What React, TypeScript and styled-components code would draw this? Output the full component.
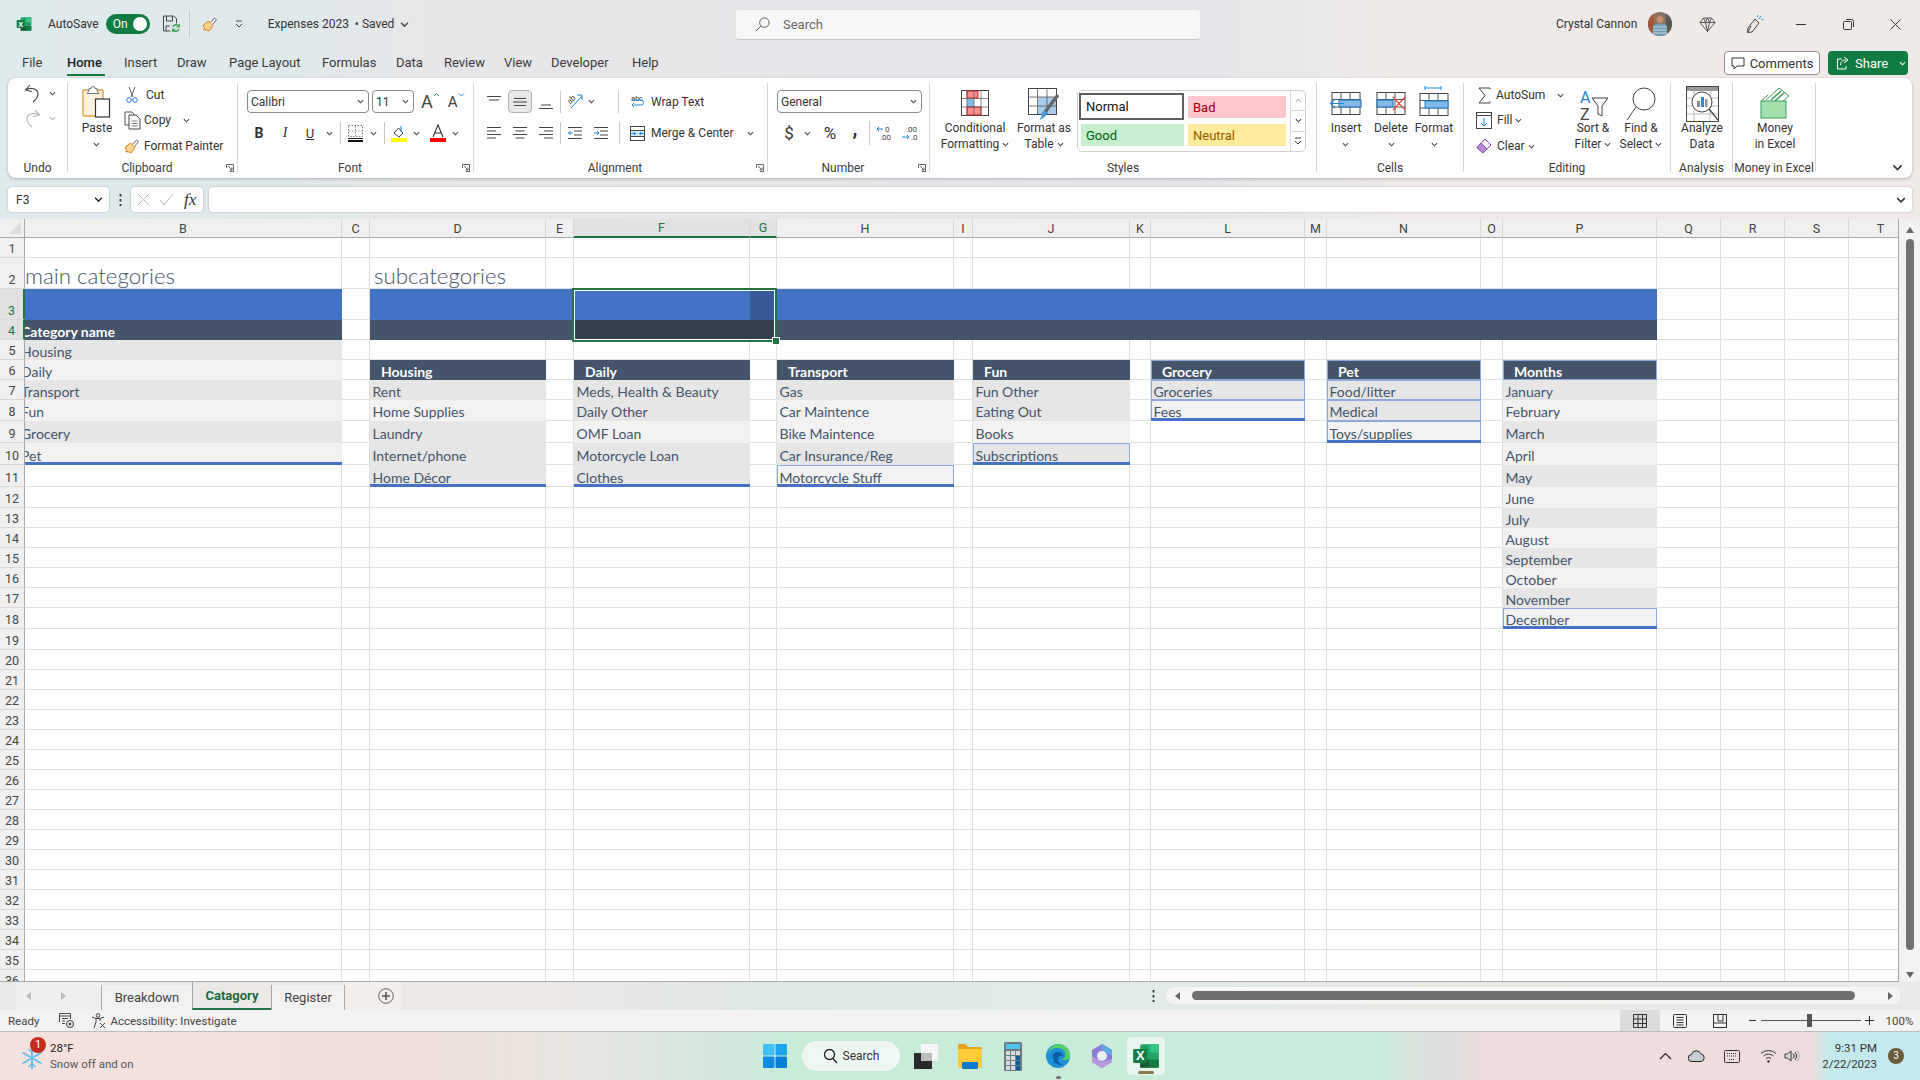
import React from 'react';
import styled, { createGlobalStyle } from 'styled-components';

const UI = `Roboto, "Liberation Sans", sans-serif`;
const CELL = `Lato, "Liberation Sans", sans-serif`;
const GREEN = '#107c41';

const Global = createGlobalStyle`
  html, body { margin: 0; padding: 0; width: 1920px; height: 1080px; overflow: hidden; background: #e6e7ea; }
  #root { width: 1920px; height: 1080px; }
  * { box-sizing: border-box; }
`;

const Page = styled.div`
  width: 1920px; height: 1080px; display: flex; flex-direction: column;
  font-family: ${UI}; font-size: 12px; color: #262626;
`;
const Chrome = styled.div`
  background: linear-gradient(90deg,#dfeaec 0,#e0e9ea 300px,#e7e7e9 430px,#e5e6ea 1200px,#efeae8 1400px,#efeae8 100%);
`;

/* title bar */
const TitleBar = styled.div`height: 48px; display: flex; align-items: center;`;
const TitleLeft = styled.div`width: 735px; display: flex; align-items: center; padding-left: 16px;`;
const TitleText = styled.span<{ $ml?: number }>`margin-left: ${p => p.$ml ?? 0}px; font-size: 12px; color: #333; white-space: nowrap; display: inline-flex; align-items: center; gap: 6px;`;
const Toggle = styled.div`
  margin-left: 7px; width: 44px; height: 20px; border-radius: 10px; background: ${GREEN}; color: #fff; font-size: 12px;
  display: flex; align-items: center; justify-content: space-between; padding: 0 3px 0 7px;
`;
const ToggleKnob = styled.i`width: 14px; height: 14px; border-radius: 50%; background: #fff;`;
const VBar = styled.i<{ $ml?: number; $h?: number }>`display: block; width: 1px; height: ${p => p.$h ?? 28}px; background: #c9c9c9; margin-left: ${p => p.$ml ?? 0}px; flex: none;`;
const Slot = styled.span<{ $ml?: number }>`display: inline-flex; align-items: center; margin-left: ${p => p.$ml ?? 0}px; flex: none;`;
const SearchBox = styled.div`
  width: 466px; height: 31px; background: #f8f8f8; border-radius: 4px; border: 1px solid #e3e3e3; border-bottom-color: #c8c8c8;
  display: flex; align-items: center; padding-left: 19px; gap: 13px; color: #666; font-size: 13px;
`;
const TitleRight = styled.div`flex: 1; display: flex; align-items: center; padding-left: 355px;`;
const Avatar = styled.div`margin-left: 11px; width: 24px; height: 24px; border-radius: 50%; overflow: hidden; flex: none;`;

/* tab row */
const TabRow = styled.div`height: 30px; display: flex; align-items: center; padding-left: 22px;`;
const RibbonTab = styled.div<{ $w: number; $on?: boolean }>`
  width: ${p => p.$w}px; font-size: 13px; color: #3a3a3a; position: relative; height: 22px; line-height: 22px; flex: none; white-space: nowrap;
  ${p => p.$on ? `font-weight: 500; color:#222; &::after{content:'';position:absolute;left:0;top:22px;width:38px;height:2px;background:${GREEN};}` : ''}
`;
const TabActions = styled.div`margin-left: auto; display: flex; gap: 8px; padding-right: 12px;`;
const CommentsButton = styled.div`
  width: 96px; height: 24px; background: #fff; border: 1px solid #8f8f8f; border-radius: 4px; font-size: 13px; color: #333;
  display: flex; align-items: center; justify-content: center; gap: 5px;
`;
const ShareButton = styled.div`
  width: 80px; height: 24px; background: ${GREEN}; border-radius: 4px; color: #fff; font-size: 13px;
  display: flex; align-items: center; padding-left: 8px; gap: 5px;
`;

/* ribbon */
const Ribbon = styled.div`
  margin: 0 8px; height: 100px; background: #fff; border-radius: 8px; box-shadow: 0 1px 3px rgba(0,0,0,.25);
  display: flex; align-items: flex-start; padding-top: 5px;
`;
const Group = styled.section<{ $w: number; $last?: boolean }>`
  width: ${p => p.$w}px; height: 89px; flex: none; display: flex; flex-direction: column;
  border-right: ${p => p.$last ? 'none' : '1px solid #d6d6d6'};
`;
const Body = styled.div<{ $pl?: number; $gap?: number }>`
  height: 79px; display: flex; padding-left: ${p => p.$pl ?? 0}px; gap: ${p => p.$gap ?? 0}px;
`;
const LabelRow = styled.div<{ $launch?: boolean }>`
  display: grid; grid-template-columns: 1fr auto 1fr; align-items: center; height: 10px; font-size: 12px; color: #3c3c3c; line-height: 12px; white-space: nowrap;
  padding-right: ${p => p.$launch ? 11 : 0}px;
`;
const LabelEnd = styled.span<{ $launch?: boolean }>`justify-self: end; display: inline-flex; margin-right: ${p => p.$launch ? -8 : 0}px;`;
const Stack = styled.div<{ $pt?: number; $gap?: number; $ml?: number; $w?: number }>`
  display: flex; flex-direction: column; padding-top: ${p => p.$pt ?? 0}px; gap: ${p => p.$gap ?? 0}px; margin-left: ${p => p.$ml ?? 0}px;
  ${p => p.$w ? `width:${p.$w}px;` : ''} flex: none;
`;
const Row = styled.div<{ $h?: number; $gap?: number; $ml?: number }>`
  display: flex; align-items: center; height: ${p => p.$h ?? 24}px; gap: ${p => p.$gap ?? 0}px; white-space: nowrap; color: #333; margin-left: ${p => p.$ml ?? 0}px;
`;
const SmallLabel = styled.span<{ $ml?: number }>`margin-left: ${p => p.$ml ?? 0}px; font-size: 12px; color: #333; white-space: nowrap;`;
const Large = styled.div<{ $w: number; $ml?: number; $ih?: number }>`
  width: ${p => p.$w}px; margin-left: ${p => p.$ml ?? 0}px; flex: none; display: flex; flex-direction: column; align-items: center; padding-top: 3px;
  font-size: 12px; line-height: 16px; text-align: center; color: #333;
`;
const LargeIcon = styled.div<{ $pt?: number }>`height: 34px; display: flex; align-items: flex-start; justify-content: center; padding-top: ${p => p.$pt ?? 0}px;`;
const LargeText = styled.div`white-space: nowrap; display: flex; flex-direction: column; align-items: center;`;
const ChevLine = styled.div`height: 16px; display: flex; align-items: center;`;
const Select = styled.div<{ $w: number; $ml?: number }>`
  width: ${p => p.$w}px; height: 23px; margin-left: ${p => p.$ml ?? 0}px; border: 1px solid #8a8a8a; border-radius: 4px; background: #fff;
  display: flex; align-items: center; justify-content: space-between; padding: 0 4px 0 3px; font-size: 12px; color: #333; flex: none;
`;
const BoldGlyph = styled.span<{ $w: number; $b?: boolean; $i?: boolean; $u?: boolean; $serif?: boolean; $fs?: number; $ml?: number; $lift?: number }>`
  width: ${p => p.$w}px; text-align: center; font-size: ${p => p.$fs ?? 13}px; flex: none; color: #333; margin-left: ${p => p.$ml ?? 0}px;
  font-weight: ${p => p.$b ? 700 : 400}; font-style: ${p => p.$i ? 'italic' : 'normal'};
  text-decoration: ${p => p.$u ? 'underline' : 'none'};
  font-family: ${p => p.$serif ? '"Liberation Serif", serif' : UI};
  transform: translateY(${p => -(p.$lift ?? 0)}px);
`;
const PressedCell = styled.div`
  width: 24px; height: 23px; background: #e8e8e8; border: 1px solid #b5b5b5; border-radius: 4px; display: flex; align-items: center; justify-content: center; margin-left: 7px;
`;
const Gallery = styled.div`
  margin: 7px 0 0 6px; width: 229px; height: 62px; border: 1px solid #d0d0d0; border-radius: 5px; display: flex; padding: 2px 0 0 1px;
`;
const StyleGrid = styled.div`display: grid; grid-template-columns: 105px 100px; grid-auto-rows: 28px; column-gap: 2px;`;
const StyleChip = styled.div<{ $bg: string; $fg: string; $on?: boolean }>`
  background: ${p => p.$bg}; color: ${p => p.$fg}; font-size: 13px; display: flex; align-items: center; padding-left: 5px;
  ${p => p.$on ? 'border: 2px solid #5e5e5e; height: 27px; margin-top: 0; color:#111;' : 'height: 22px; margin: 3px 0 0 2px;'}
`;
const GalleryScroll = styled.div`
  margin-left: 4px; width: 16px; display: flex; flex-direction: column; border-left: 1px solid #d8d8d8; margin-top: -2px;
`;
const GalleryStep = styled.div`flex: 1; display: flex; align-items: center; justify-content: center; border-bottom: 1px solid #d8d8d8; &:last-child{border-bottom:none;}`;

/* formula bar */
const FormulaStrip = styled.div`height: 41px; padding: 9px 8px 7px; display: flex; align-items: stretch;`;
const NameBox = styled.div`
  width: 101px; background: #fff; border-radius: 4px; box-shadow: 0 0 2px rgba(0,0,0,.25); font-size: 12px; color: #333;
  display: flex; align-items: center; justify-content: space-between; padding: 0 6px 0 8px;
`;
const DotsSlot = styled.div`width: 22px; display: flex; align-items: center; justify-content: center;`;
const FxBox = styled.div`
  width: 72px; background: #fff; border-radius: 4px; box-shadow: 0 0 2px rgba(0,0,0,.25); display: flex; align-items: center; padding-left: 6px; gap: 9px;
`;
const FxMark = styled.span`font-family: "Liberation Serif", serif; font-style: italic; font-size: 17px; color: #333; margin-left: 1px;`;
const FormulaInput = styled.div`
  margin-left: 6px; flex: 1; background: #fff; border-radius: 4px; box-shadow: 0 0 2px rgba(0,0,0,.25); display: flex; align-items: center; justify-content: flex-end; padding-right: 6px;
`;

/* sheet */
const SheetArea = styled.div`height: 763px; display: flex; background: #efefef;`;
const Grid = styled.div<{ $cols: string; $rows: string }>`
  position: relative; width: 1899px; height: 763px; overflow: hidden; display: grid; background: #fff; flex: none;
  grid-template-columns: ${p => p.$cols}; grid-template-rows: ${p => p.$rows}; border-bottom: 1px solid #a9a9a9; border-right: 1px solid #a9a9a9;
`;
const Corner = styled.div`
  background: #f0f0f0; border-bottom: 1px solid #a9a9a9; border-right: 1px solid #a9a9a9; position: relative;
  &::after { content: ''; position: absolute; right: 3px; bottom: 3px; border-style: solid; border-width: 0 0 12px 12px; border-color: transparent transparent #dcdcdc transparent; }
`;
const ColHead = styled.div<{ $on?: boolean }>`
  background: ${p => p.$on ? '#e1e1e1' : '#f0f0f0'}; color: ${p => p.$on ? '#217346' : '#444'}; font-size: 12.5px;
  display: flex; align-items: center; justify-content: center; border-right: 1px solid #d8d8d8;
  border-bottom: ${p => p.$on ? '2px solid #217346' : '1px solid #a9a9a9'};
`;
const RowHead = styled.div<{ $on?: boolean }>`
  background: ${p => p.$on ? '#e1e1e1' : '#f0f0f0'}; color: ${p => p.$on ? '#217346' : '#444'}; font-size: 12.5px; line-height: 16px;
  display: flex; align-items: flex-end; justify-content: center; border-bottom: 1px solid #d8d8d8;
  border-right: ${p => p.$on ? '2px solid #217346' : '1px solid #a9a9a9'};
`;
const Cell = styled.div<{ $bg?: string; $fg?: string; $bold?: boolean; $pad?: number; $clip?: boolean; $box?: boolean; $rule?: boolean; $title?: boolean; $top: number }>`
  background: ${p => p.$bg ?? '#fff'}; color: ${p => p.$fg ?? '#44546a'};
  font-family: ${CELL}; font-size: ${p => p.$title ? 22.3 : 14}px; font-weight: ${p => p.$title ? 300 : p.$bold ? 700 : 400};
  line-height: 19px; padding-left: ${p => p.$pad ?? 3}px; padding-top: ${p => p.$title ? 7.5 : p.$top}px; overflow: hidden; white-space: nowrap; display: flex; align-items: flex-start;
  text-indent: ${p => p.$clip ? '-4px' : '0'};
  border-right: ${p => p.$bg ? 'none' : '1px solid #e0e0e0'}; border-bottom: ${p => p.$bg ? 'none' : '1px solid #e0e0e0'};
  box-shadow: ${p => [p.$box ? 'inset 0 0 0 1px #8ea9db' : '', p.$rule ? 'inset 0 -3px 0 #4472c4' : ''].filter(Boolean).reverse().join(',') || 'none'};
`;
const Selection = styled.div`
  position: absolute; left: 572px; top: 69px; width: 205px; height: 54px; border: 2px solid #217346; box-shadow: inset 0 0 0 1px #fff; pointer-events: none;
  &::after { content: ''; position: absolute; right: -4px; bottom: -4px; width: 6px; height: 6px; background: #217346; outline: 1px solid #fff; }
`;
const VScroll = styled.div`
  width: 21px; margin: 3px 0 0 1px; border-radius: 8px; display: flex; flex-direction: column; align-items: center; padding: 3px 0 2px; background: #f3f3f3;
`;
const VThumb = styled.div`width: 8px; height: 711px; border-radius: 4px; background: #707070; margin: 4px 0 auto;`;

/* sheet tabs */
const SheetTabs = styled.div`
  height: 28px; display: flex; align-items: stretch;
  background: linear-gradient(90deg,#e8ebea 0,#ece8e6 300px,#efe9e6 500px,#e6e7e6 640px,#e0eae5 760px,#e2ebe5 1200px,#ece9e4 1500px,#ebeae8 1800px);
`;
const TabNav = styled.div`margin-left: 16px; width: 85px; display: flex; align-items: center; gap: 24px; padding-left: 8px; background: rgba(255,255,255,.25);`;
const SheetTab = styled.div<{ $w: number; $on?: boolean }>`
  width: ${p => p.$w}px; display: flex; align-items: center; justify-content: center; font-size: 13px; flex: none; border-left: 1px solid #a8a8a8;
  color: ${p => p.$on ? '#1c6b3d' : '#444'}; font-weight: ${p => p.$on ? 700 : 400};
  background: ${p => p.$on ? 'transparent' : '#f2f2f2'}; margin-top: ${p => p.$on ? 0 : 3}px;
  border-bottom: ${p => p.$on ? `2px solid #217346` : 'none'};
`;
const TabEndBar = styled.i`width: 1px; background: #a8a8a8; margin-top: 3px;`;
const AddArea = styled.div`width: 56px; display: flex; align-items: center; padding-left: 33px; background: rgba(255,255,255,.25);`;
const SheetDots = styled.div`margin-left: 741px; width: 22px; display: flex; align-items: center; justify-content: center;`;
const HScroll = styled.div`
  width: 734px; height: 17px; margin: 5px 0 0 2px; background: #f5f5f5; border-radius: 8px; display: flex; align-items: center; padding: 0 5px 0 7px;
`;
const HThumb = styled.div`width: 665px; height: 9px; border-radius: 5px; background: #707070; margin-left: 9px;`;

/* status */
const StatusBar = styled.div`
  height: 22px; background: #f3f3f3; border-bottom: 1px solid #bdbdbd; display: flex; align-items: center; padding-left: 8px; font-size: 11.5px; color: #444; 
`;
const StatusText = styled.span<{ $ml?: number }>`margin-left: ${p => p.$ml ?? 0}px; white-space: nowrap;`;
const ViewButton = styled.div<{ $on?: boolean; $ml?: number }>`
  width: 40px; height: 21px; display: flex; align-items: center; justify-content: center; background: ${p => p.$on ? '#dcdcdc' : 'transparent'}; flex: none; margin-left: ${p => p.$ml ?? 0}px;
`;
const ZoomTrack = styled.div`margin-left: 5px; width: 100px; height: 1px; background: #555; position: relative; flex: none;
  &::after { content: ''; position: absolute; left: 46px; top: -6px; width: 5px; height: 13px; background: #555; }`;

/* taskbar */
const Taskbar = styled.div`
  height: 48px; display: flex; align-items: center;
  background: linear-gradient(90deg,#f4e2df 0,#f2dfdc 400px,#e6e6e0 600px,#d4e8db 700px,#c9ecd9 800px,#c8ecd9 1380px,#d8e3dc 1410px,#dedede 1450px,#f0dcdc 1490px,#efdcdc 1810px,#c3ebee 1830px,#c3ebee 100%);
`;
const Weather = styled.div`margin-left: 20px; width: 743px; display: flex; align-items: center; flex: none;`;
const WeatherIcon = styled.div`position: relative; width: 24px; height: 24px; flex: none; margin-top: 4px;`;
const NotifyDot = styled.div`
  position: absolute; left: 10px; top: -9px; width: 16px; height: 16px; border-radius: 50%; background: #c42b1c; color: #fff; font-size: 11px; line-height: 16px; text-align: center;
`;
const WeatherText = styled.div`margin-left: 6px; display: flex; flex-direction: column; font-size: 11.5px; line-height: 16px; color: #222;`;
const WeatherSub = styled.span`color: #555;`;
const SearchPill = styled.div`
  margin-left: 15px; width: 98px; height: 30px; border-radius: 15px; background: #eef7f2; display: flex; align-items: center; justify-content: center; gap: 5px; font-size: 12px; color: #333; flex: none;
`;
const ActiveApp = styled.div`
  margin-left: 14px; width: 38px; height: 38px; background: rgba(255,255,255,.55); border-radius: 4px; display: flex; align-items: center; justify-content: center; position: relative; flex: none;
  &::after { content: ''; position: absolute; bottom: 1px; left: 11px; width: 16px; height: 3px; border-radius: 2px; background: #8a7a4a; }
`;
const RunDot = styled.div`display: flex; flex-direction: column; align-items: center; position: relative; margin-left: 24px;
  &::after { content: ''; position: absolute; bottom: -8px; width: 5px; height: 3px; border-radius: 2px; background: #777; }`;
const Clock = styled.div`margin-left: 17px; width: 60px; display: flex; flex-direction: column; align-items: flex-end; font-size: 11.5px; line-height: 16px; color: #333;`;
const CountBadge = styled.div`margin-left: 11px; width: 16px; height: 16px; border-radius: 50%; background: #6b5a3a; color: #fff; font-size: 10px; line-height: 16px; text-align: center;`;

/* icons */
const Chev = ({ s = 7, c = '#444', up = false }: { s?: number; c?: string; up?: boolean }) => (
  <svg width={s} height={s} viewBox="0 0 8 8"><path d={up ? 'M1 5.500 4 2.500 7 5.500' : 'M1 2.500 4 5.500 7 2.500'} fill="none" stroke={c} strokeWidth="1.200" /></svg>
);
const ExcelLogo = ({ s = 16 }: { s?: number }) => (
  <svg width={s} height={s} viewBox="0 0 24 24">
    <rect x="7" y="2" width="16" height="20" rx="1.500" fill="#21a366" />
    <rect x="15" y="2" width="8" height="7" fill="#33c481" />
    <rect x="7" y="15" width="8" height="7" fill="#185c37" />
    <rect x="15" y="15" width="8" height="7" fill="#107c41" />
    <rect x="1" y="6" width="12" height="12" rx="1" fill="#107c41" />
    <text x="7" y="15.800" fontSize="11" fontWeight="700" fill="#fff" textAnchor="middle" fontFamily="Liberation Sans">X</text>
  </svg>
);
const Brush = ({ s = 16 }: { s?: number }) => (
  <svg width={s} height={s} viewBox="0 0 16 16">
    <path d="M1 9.500 6.500 5l4.500 4.500L7 15 5 13.500 4 14.500 3 13 1.800 13.500 2.500 11.500Z" fill="#fbd38d" stroke="#e07b16" strokeWidth="1" />
    <path d="M8.500 6.500 12.500 2 14.500 3.500 10.500 8.500" fill="#fff" stroke="#555" strokeWidth=".9" />
  </svg>
);
const SaveSync = () => (
  <svg width="18" height="20" viewBox="0 0 18 20">
    <path d="M1.500 2h10l3 2.500v5M1.500 2v15h7" fill="none" stroke="#444" />
    <path d="M4.500 2v5h6V2M4 17v-5h4" fill="none" stroke="#444" />
    <path d="M11 13a3.500 3.500 0 0 1 6 -1M17 15a3.500 3.500 0 0 1-6 1" fill="none" stroke="#2fa24f" strokeWidth="1.500" />
    <path d="M17.500 10v3h-3M10.500 18v-3h3" fill="none" stroke="#2fa24f" />
  </svg>
);
const Customize = () => (
  <svg width="8" height="9" viewBox="0 0 8 9"><path d="M1 1h6M1 4l3 3 3-3" fill="none" stroke="#444" /></svg>
);
const SearchIcon = ({ s = 15, c = '#555' }: { s?: number; c?: string }) => (
  <svg width={s} height={s} viewBox="0 0 16 16"><circle cx="10" cy="6" r="5" fill="none" stroke={c} /><path d="M6.400 9.600 1 15" stroke={c} /></svg>
);
const AvatarArt = () => (
  <svg width="24" height="24" viewBox="0 0 24 24">
    <rect width="24" height="24" fill="#8a7263" />
    <rect x="0" y="0" width="6" height="24" fill="#a4573f" /><rect x="18" y="0" width="6" height="24" fill="#5c5a55" />
    <circle cx="12" cy="7.500" r="3.500" fill="#c9906e" />
    <path d="M5 24V15q0-3.500 7-3.500t7 3.500v9Z" fill="#6f9cb3" />
    <path d="M5 15h14M5 18h14M5 21h14" stroke="#c4dbe4" />
  </svg>
);
const Diamond = () => (
  <svg width="17" height="17" viewBox="0 0 17 17"><path d="M4.500 2h8L16 6.500 8.500 15.500 1 6.500ZM1 6.500h15M4.500 2l2 4.500 2 9 2-9 2-4.500M6.500 6.500 8.500 2l2 4.500" fill="none" stroke="#444" strokeWidth=".9" /></svg>
);
const PenSpark = () => (
  <svg width="18" height="20" viewBox="0 0 18 20">
    <path d="M9 5 13 9 6 18 1.500 18.500 2 14Z" fill="none" stroke="#444" /><path d="M2 18 5 12" stroke="#444" />
    <path d="M13 5 15 2M15 6l2.500-1M11.500 3l.5-2" stroke="#2b9ed8" />
  </svg>
);
const WinMin = () => <svg width="11" height="11" viewBox="0 0 11 11"><path d="M0 5.500h10" stroke="#333" /></svg>;
const WinMax = () => <svg width="11" height="11" viewBox="0 0 11 11"><rect x=".5" y="2.500" width="8" height="8" rx="1" fill="none" stroke="#333" /><path d="M3 .5h5.500a2 2 0 0 1 2 2V8" fill="none" stroke="#333" /></svg>;
const WinClose = () => <svg width="11" height="11" viewBox="0 0 11 11"><path d="M.5.5l10 10M10.500.5l-10 10" stroke="#333" /></svg>;
const Bubble = ({ c = '#333' }: { c?: string }) => (
  <svg width="14" height="13" viewBox="0 0 14 13"><path d="M1 1h12v8H6l-3 3V9H1Z" fill="none" stroke={c} /></svg>
);
const ShareIcon = () => (
  <svg width="14" height="14" viewBox="0 0 14 14"><path d="M6 3H1.500v10H10v-3M4.500 9c0-4 3-5 6-5M8 1l4 3-4 3" fill="none" stroke="#fff" /></svg>
);
const UndoIcon = ({ c = '#444' }: { c?: string }) => (
  <svg width="17" height="19" viewBox="0 0 17 19"><path d="M6 1 1.500 6 8 7.500M2 6c4-3 12-1.500 12 4 0 4-3 6-5 8" fill="none" stroke={c} strokeWidth="1.100" /></svg>
);
const RedoIcon = () => (
  <svg width="17" height="19" viewBox="0 0 17 19"><path d="M11 1 15.500 6 9 7.500M15 6c-4-3-12-1.500-12 4 0 4 3 6 5 8" fill="none" stroke="#b5b5b5" strokeWidth="1.100" /></svg>
);
const PasteIcon = () => (
  <svg width="30" height="32" viewBox="0 0 30 32">
    <rect x="1" y="4" width="20" height="26" rx="1" fill="#fdf3e0" stroke="#e8a33d" strokeWidth="1.400" />
    <path d="M7 5V2.500h2a2 2 0 0 1 4 0h2V5l2 2.500H5Z" fill="#fff" stroke="#777" />
    <rect x="13.500" y="13" width="14" height="18" fill="#fff" stroke="#333" strokeWidth="1.200" />
  </svg>
);
const Scissors = () => (
  <svg width="12" height="18" viewBox="0 0 12 18"><path d="M3 1l4 10M9 1 5 11" stroke="#666" fill="none" /><circle cx="3" cy="14" r="2.300" fill="none" stroke="#2b7cd3" /><circle cx="9" cy="14" r="2.300" fill="none" stroke="#2b7cd3" /></svg>
);
const CopyIcon = () => (
  <svg width="17" height="19" viewBox="0 0 17 19"><path d="M5 14H1V1h7l2 2v1" fill="#fff" stroke="#555" /><path d="M5 4h7l4 4v10H5Z" fill="#fff" stroke="#444" /><path d="M7.500 10h6M7.500 12.500h6M7.500 15h6" stroke="#777" /></svg>
);
const GrowGlyph = styled.span<{ $down?: boolean }>`
  font-size: ${p => p.$down ? 15 : 18}px; color: #444; line-height: 20px; display: inline-flex; align-items: flex-start;
`;
const AUp = ({ down = false }: { down?: boolean }) => (
  <GrowGlyph $down={down}>A<svg width="7" height="6" viewBox="0 0 7 6"><path d={down ? 'M1 1.500 3.500 4 6 1.500' : 'M1 4 3.500 1.500 6 4'} fill="none" stroke="#2b88d8" /></svg></GrowGlyph>
);
const Lines = ({ kind, w = 14 }: { kind: 'top' | 'mid' | 'bot' | 'l' | 'c' | 'r'; w?: number }) => {
  const d = {
    top: 'M0 1.500h14M2 5h10',
    mid: 'M1 3.500h12M0 7h14M1 10.500h12',
    bot: 'M2 10h10M0 13.500h14',
    l: 'M0 1.500h14M0 5h9M0 8.500h14M0 12h9',
    c: 'M0 1.500h14M2.500 5h9M0 8.500h14M2.500 12h9',
    r: 'M0 1.500h14M5 5h9M0 8.500h14M5 12h9'
  }[kind];
  return <svg width={w} height="14" viewBox="0 0 14 14"><path d={d} stroke="#444" fill="none" /></svg>;
};
const Indent = ({ inc = false }: { inc?: boolean }) => (
  <svg width="14" height="14" viewBox="0 0 14 14"><path d="M0 1.500h14M6 5h8M6 9h8M0 12.500h14" stroke="#444" /><path d={inc ? 'M0 7h4.500M3 5l2 2-2 2' : 'M5 7H.5M2.500 5l-2 2 2 2'} stroke="#1e88d2" fill="none" /></svg>
);
const Orientation = () => (
  <svg width="17" height="17" viewBox="0 0 17 17" overflow="visible"><text x="1" y="9" fontSize="8" fill="#444" transform="rotate(-45 5 8)" fontFamily="Roboto">ab</text><path d="M4 15 15 3M10 2h5v5" stroke="#1e88d2" fill="none" /></svg>
);
const WrapIcon = () => (
  <svg width="15" height="15" viewBox="0 0 15 15" overflow="visible"><text x="0" y="7" fontSize="8" fill="#444" fontFamily="Roboto">ab</text><text x="8" y="7" fontSize="7" fill="#444" fontFamily="Roboto">c</text><path d="M3 13h7a2.500 2.500 0 0 0 0-5H1M3 11l-2 2 2 2" transform="translate(0 -2)" fill="none" stroke="#1e88d2" /></svg>
);
const MergeIcon = () => (
  <svg width="15" height="15" viewBox="0 0 15 15"><rect x=".5" y=".5" width="14" height="14" fill="none" stroke="#444" /><rect x=".5" y="4.500" width="14" height="6" fill="#cfe6f6" stroke="#444" /><path d="M1.500 7.500h4M4 6l1.500 1.500L4 9M13.500 7.500h-4M11 6 9.500 7.500 11 9" stroke="#1e88d2" fill="none" /></svg>
);
const BorderIcon = () => (
  <svg width="15" height="17" viewBox="0 0 15 17"><rect x=".5" y=".5" width="14" height="11" fill="none" stroke="#777" strokeDasharray="1.500 1.500" /><path d="M7.500 1v10M1 6h13" stroke="#888" strokeDasharray="1.500 1.500" /><path d="M0 13.500h15" stroke="#222" /><path d="M0 16h15" stroke="#111" strokeWidth="2" /></svg>
);
const FillIcon = () => (
  <svg width="16" height="18" viewBox="0 0 16 18"><path d="M3 9 7.500 4 12 9 8 13Z" fill="#fff" stroke="#444" /><path d="M10 2v6" stroke="#1e88d2" /><rect y="14" width="16" height="4" fill="#ffff00" /></svg>
);
const FontColor = () => (
  <svg width="16" height="18" viewBox="0 0 16 18"><path d="M3 13 8 1l5 12M5 9h6" fill="none" stroke="#333" strokeWidth="1.100" /><rect y="14" width="16" height="4" fill="#ff0000" /></svg>
);
const DecIcon = ({ inc = false }: { inc?: boolean }) => (
  <svg width="16" height="18" viewBox="0 0 16 18" overflow="visible"><text x={inc ? 4 : 9} y="8" fontSize="8" fill="#444" fontFamily="Roboto">{inc ? '.00' : '0'}</text><text x={inc ? 9 : 4} y="16" fontSize="8" fill="#444" fontFamily="Roboto">{inc ? '.0' : '.00'}</text><path d={inc ? 'M0 13h7M5 11l2 2-2 2' : 'M7 5H1M3 3 1 5l2 2'} stroke="#1e88d2" fill="none" /></svg>
);
const CondFormat = () => (
  <svg width="28" height="26" viewBox="0 0 28 26">
    <rect x="0.500" y="0.500" width="27" height="25" fill="#fff" stroke="#444" />
    <rect x="6" y="1" width="11" height="7" fill="#f78f8f" stroke="#c22" /><rect x="6" y="9" width="7" height="8" fill="#7fbaeb" /><rect x="6" y="17" width="14" height="8" fill="#f78f8f" stroke="#c22" />
    <path d="M6 0v26M13 0v26M20 0v26M0 8.500h28M0 17h28" stroke="#555" fill="none" strokeWidth=".7" />
  </svg>
);
const TableFormat = () => (
  <svg width="32" height="34" viewBox="0 0 32 34">
    <rect x=".5" y=".5" width="28" height="26" fill="#fff" stroke="#444" />
    <rect x="10" y="9" width="18" height="17" fill="#a6cdee" />
    <path d="M9.500 0v27M19 0v27M0 9h28M0 18h28" stroke="#555" strokeWidth=".8" />
    <path d="M30 7 17 24" stroke="#666" strokeWidth="3.500" /><path d="M14 24q3-2 5 1-1 5-8 7 3-3 3-8Z" fill="#4a9bd9" />
  </svg>
);
const CellIcon = ({ kind }: { kind: 'ins' | 'del' | 'fmt' }) => (
  <svg width="32" height="30" viewBox="0 0 32 30">
    {kind === 'fmt' && <path d="M7 2h16M7 0v4M23 0v4" stroke="#1e88d2" />}
    <g transform={kind === 'fmt' ? 'translate(0 7)' : 'translate(0 6)'}>
      <rect x="2" y=".5" width="28" height="22" fill="#fff" stroke="#444" />
      <path d="M11 0v23M20 0v23M2 7.500h28M2 15h28" stroke="#555" />
      {kind === 'fmt' && <rect x="7" y="8" width="23" height="7" fill="#7fbaeb" stroke="#1e88d2" />}
      {kind === 'ins' && <><rect x="9" y="8" width="22" height="7" fill="#7fbaeb" stroke="#1e6fb8" /><path d="M14 11.500H1M5 7 .5 11.500 5 16" stroke="#1e88d2" fill="none" strokeWidth="1.200" /></>}
      {kind === 'del' && <><rect x="2" y="8" width="16" height="7" fill="#7fbaeb" stroke="#1e6fb8" /><path d="M18 5l12 13M30 5 18 18" stroke="#e8504a" strokeWidth="1.200" /></>}
    </g>
  </svg>
);
const Sigma = () => <svg width="13" height="17" viewBox="0 0 13 17"><path d="M12 2.500V1H1l6 7.500L1 16h11v-1.500" fill="none" stroke="#444" /></svg>;
const FillDown = () => <svg width="16" height="17" viewBox="0 0 16 17"><rect x=".5" y=".5" width="15" height="16" fill="none" stroke="#444" /><path d="M1 3.500h14" stroke="#444" /><path d="M8 6v8M5 11l3 3 3-3" stroke="#1e88d2" fill="none" /></svg>;
const Eraser = () => <svg width="16" height="16" viewBox="0 0 16 16"><path d="M1 9.500 9 1l6 6-8 8Z" fill="#fff" stroke="#8a4fb5" /><path d="M1 9.500 5 5l6 6-4 4Z" fill="#b98bd6" stroke="#8a4fb5" /></svg>;
const SortIcon = () => (
  <svg width="33" height="34" viewBox="0 0 33 34">
    <text x="3" y="15" fontSize="16" fill="#1e88d2" fontFamily="Roboto">A</text><text x="3" y="32" fontSize="16" fill="#444" fontFamily="Roboto">Z</text>
    <path d="M15 10h16l-6 8v10l-4-2v-8Z" fill="none" stroke="#444" />
  </svg>
);
const FindIcon = () => <svg width="30" height="34" viewBox="0 0 30 34"><circle cx="18" cy="12" r="11" fill="none" stroke="#444" /><path d="M10 20 1 33" stroke="#444" /></svg>;
const AnalyzeIcon = () => (
  <svg width="33" height="36" viewBox="0 0 33 36">
    <rect x=".5" y=".5" width="32" height="35" fill="#fff" stroke="#444" /><rect x="1" y="1" width="31" height="4" fill="#999" />
    <path d="M8 5v30M24 5v30M1 12h31M1 20h31M1 28h31" stroke="#bbb" />
    <circle cx="16" cy="16" r="10" fill="#fff" stroke="#444" /><rect x="11" y="15" width="3" height="6" fill="#888" /><rect x="15" y="11" width="3" height="10" fill="#2b88d8" /><rect x="19" y="13" width="2.500" height="8" fill="#999" />
    <path d="M23 23 32 34" stroke="#444" strokeWidth="1.200" />
  </svg>
);
const MoneyIcon = () => (
  <svg width="30" height="32" viewBox="0 0 30 32">
    <path d="M6 13 19 1l10 8-7 6" fill="#fff" stroke="#3a9e5c" /><path d="M11 13 21 4M15 14l9-8" stroke="#3a9e5c" strokeWidth="1.500" />
    <rect x="1" y="14" width="25" height="17" fill="#a5dfae" stroke="#3a9e5c" /><path d="M1 14 8 8" stroke="#3a9e5c" />
  </svg>
);
const Launcher = () => <svg width="8" height="8" viewBox="0 0 8 8"><path d="M.5 4V.5H7.500V7.500H4M2 2l4 4M3.500 6H6V3.500" fill="none" stroke="#555" strokeWidth=".9" /></svg>;
const Cross = () => <svg width="13" height="13" viewBox="0 0 13 13"><path d="M1 1l11 11M12 1 1 12" stroke="#b8b8b8" /></svg>;
const Check = () => <svg width="15" height="13" viewBox="0 0 15 13"><path d="M1 7l4 5L14 1" fill="none" stroke="#b8b8b8" /></svg>;
const VDots = () => <svg width="3" height="12" viewBox="0 0 3 12"><path d="M1.500 0v2.500M1.500 5v2.500M1.500 10v2" stroke="#333" strokeWidth="1.800" /></svg>;
const Arrow = ({ dir, c = '#666' }: { dir: 'l' | 'r' | 'u' | 'd'; c?: string }) => {
  const d = { l: 'M7 1v8L2 5Z', r: 'M3 1v8l5-4Z', u: 'M1 8h8L5 2Z', d: 'M1 2h8L5 8Z' }[dir];
  return <svg width="10" height="10" viewBox="0 0 10 10"><path d={d} fill={c} /></svg>;
};
const PlusCircle = () => <svg width="16" height="16" viewBox="0 0 16 16"><circle cx="8" cy="8" r="7.300" fill="none" stroke="#666" /><path d="M8 4v8M4 8h8" stroke="#555" strokeWidth="1.600" /></svg>;
const MacroIcon = () => <svg width="15" height="15" viewBox="0 0 15 15"><path d="M.5 9V.5h11V6M1 3h10" fill="none" stroke="#444" /><path d="M3 5.500h6M3 8h3M3 10.500h3" stroke="#444" /><circle cx="11" cy="11" r="3.500" fill="none" stroke="#333" /><circle cx="11" cy="11" r="1.300" fill="#333" /></svg>;
const AccessIcon = () => <svg width="16" height="16" viewBox="0 0 16 16"><circle cx="7" cy="2.500" r="1.800" fill="none" stroke="#444" /><path d="M1 4l4 1.500h4L13 4M5 6v3l-2 6M9 6v2" fill="none" stroke="#444" /><path d="M9 10l5 5M14 10l-5 5" stroke="#444" /></svg>;
const GridView = () => <svg width="14" height="14" viewBox="0 0 14 14"><path d="M.5.5h13v13H.5ZM5 .5v13M9.500.5v13M.5 5h13M.5 9.500h13" fill="none" stroke="#333" /></svg>;
const PageView = () => <svg width="14" height="14" viewBox="0 0 14 14"><rect x=".5" y=".5" width="13" height="13" rx="1" fill="none" stroke="#333" /><path d="M3.500 3.500h7M3.500 6h7M3.500 8.500h7M3.500 11h7" stroke="#333" /></svg>;
const BreakView = () => <svg width="14" height="14" viewBox="0 0 14 14"><rect x=".5" y=".5" width="13" height="13" fill="none" stroke="#333" /><path d="M5 .5V7h5V.5M.5 9h13" fill="none" stroke="#333" /></svg>;
const Snow = () => (
  <svg width="24" height="24" viewBox="0 0 24 24"><g stroke="#66bff0" strokeWidth="2" fill="none"><path d="M12 1v22M2.500 6.500l19 11M21.500 6.500l-19 11" /><path d="M8.500 3 12 6l3.500-3M8.500 21 12 18l3.500 3" strokeWidth="1.400" /></g></svg>
);
const WinLogo = () => (
  <svg width="24" height="24" viewBox="0 0 24 24"><rect x="0" y="0" width="11.500" height="11.500" rx="1" fill="#3ec0f5" /><rect x="12.500" y="0" width="11.500" height="11.500" rx="1" fill="#1ea4ec" /><rect x="0" y="12.500" width="11.500" height="11.500" rx="1" fill="#0f8de0" /><rect x="12.500" y="12.500" width="11.500" height="11.500" rx="1" fill="#0a7fd8" /></svg>
);
const TaskView = () => <svg width="24" height="26" viewBox="0 0 24 26"><rect x="0" y="10" width="18" height="16" fill="#2a2a2a" /><rect x="7" y="1" width="17" height="17" fill="#f6f6f6" /><rect x="7" y="10" width="11" height="8" fill="#bdbdbd" /></svg>;
const Folder = () => <svg width="24" height="25" viewBox="0 0 24 25"><path d="M0 1.500a1.500 1.500 0 0 1 1.500-1.500h6L10 3h12.500A1.500 1.500 0 0 1 24 4.500V8H0Z" fill="#e5a31b" /><path d="M0 5h24v18a1 1 0 0 1-1 1H1a1 1 0 0 1-1-1Z" fill="#fecb3c" /><rect x="4" y="18" width="16" height="7" rx="1" fill="#0f78d1" /></svg>;
const Calc = () => <svg width="18" height="29" viewBox="0 0 18 29"><rect width="18" height="29" rx="1.500" fill="#6d7b85" /><rect x="2" y="2" width="14" height="5" fill="#4dc6ec" />{[9, 14, 19, 24].map(y => [2, 7, 12].map(x => <rect key={`${x}${y}`} x={x} y={y} width="4" height="4" fill={x === 12 && y > 13 ? '#0f5a99' : '#d7dce0'} />))}</svg>;
const Edge = () => (
  <svg width="24" height="30" viewBox="0 0 24 30">
    <circle cx="12" cy="15" r="12" fill="#1d8fdb" /><path d="M12 3a12 12 0 0 1 12 12q0 4-4 4h-5q6-3 4-8-2-4-8-4-6 0-9 5A12 12 0 0 1 12 3Z" fill="#56cf63" /><path d="M7 15q0-4 5-4t5 4q-5-1-5 4 0 3 5 5-10 1-10-9Z" fill="#0b5fa8" />
  </svg>
);
const Hex = () => <svg width="22" height="26" viewBox="0 0 22 26"><path d="M11 1l10 6v12l-10 6-10-6V7Z" fill="#8a7bd8" /><path d="M11 1l10 6v6l-10-6Z" fill="#5aa9e6" /><path d="M1 13l10 6 10-3v3l-10 6-10-6Z" fill="#b99ae0" /><circle cx="11" cy="13" r="5" fill="#e8f0f4" /></svg>;
const Cloud = () => <svg width="17" height="12" viewBox="0 0 17 12"><path d="M4 11.500a3.500 3.500 0 0 1-.5-7A5 5 0 0 1 13 4a3.800 3.800 0 0 1 0 7.500Z" fill="#c8cdd0" stroke="#222" /></svg>;
const Keyboard = () => <svg width="16" height="13" viewBox="0 0 16 13"><rect x=".5" y=".5" width="15" height="12" rx="1" fill="none" stroke="#333" /><path d="M3 3.500h10M3 6h10M5 9.500h6" stroke="#333" strokeDasharray="1 1" /></svg>;
const Wifi = () => <svg width="17" height="14" viewBox="0 0 17 14"><path d="M1 4.500a11 11 0 0 1 15 0M3.500 7a7.500 7.500 0 0 1 10 0M6 9.500a4 4 0 0 1 5 0" fill="none" stroke="#333" /><circle cx="8.500" cy="12.500" r="1.200" fill="#333" /></svg>;
const Speaker = () => <svg width="16" height="14" viewBox="0 0 16 14"><path d="M1 5v4h2.500L7 12V2L3.500 5Z" fill="none" stroke="#333" /><path d="M9 4.500a3.500 3.500 0 0 1 0 5M11 3a6 6 0 0 1 0 8" fill="none" stroke="#333" /><path d="M13 1.500a8 8 0 0 1 0 11" fill="none" stroke="#aaa" /></svg>;
const TrayCaret = () => <svg width="13" height="8" viewBox="0 0 13 8"><path d="M1 7l5.500-5.500L12 7" fill="none" stroke="#222" strokeWidth="1.200" /></svg>;
const WinMinSmall = () => <svg width="7" height="7" viewBox="0 0 7 7"><path d="M0 3.500h7" stroke="#333" /></svg>;
const PlusSmall = () => <svg width="9" height="9" viewBox="0 0 9 9"><path d="M0 4.500h9M4.500 0v9" stroke="#333" /></svg>;
const SearchGlass = () => <svg width="15" height="16" viewBox="0 0 15 16"><circle cx="6.500" cy="6.500" r="5" fill="none" stroke="#222" strokeWidth="1.300" /><path d="M10 10.500 14 15" stroke="#222" strokeWidth="1.300" /></svg>;

/* sheet data */
const DARK = '#e6e6e6', LIGHT = '#f2f2f2', HEAD = '#44546a', BLUE = '#4472c4';
const COLS: [string, number][] = [['B', 317], ['C', 28], ['D', 176], ['E', 28], ['F', 176], ['G', 27], ['H', 177], ['I', 19], ['J', 157], ['K', 21], ['L', 154], ['M', 22], ['N', 154], ['O', 22], ['P', 154], ['Q', 64], ['R', 64], ['S', 64], ['T', 64]];
const ROWS = [20, 31, 31, 20, 20, 20, 20, 21, 22, 22, 22, 21, 20, 20, 20, 20, 20, 21, 21, ...Array(17).fill(20)];

type Spec = { text?: string; bg?: string; fg?: string; bold?: boolean; pad?: number; clip?: boolean; box?: boolean; rule?: boolean; title?: boolean };
const cells: Record<string, Spec> = {};
const list = (col: string, start: number, items: [string, string][], boxed: 'all' | 'last' | 'none' = 'none', clip = false) => {
  items.forEach(([text, bg], i) => {
    const last = i === items.length - 1;
    cells[col + (start + i)] = { text, bg, clip, pad: clip ? 0 : 2.5, rule: last, box: boxed === 'all' || (boxed === 'last' && last) };
  });
};
cells.B2 = { text: 'main categories', title: true, pad: 0 };
cells.D2 = { text: 'subcategories', title: true, pad: 4 };
'BDEFGHIJKLMNOP'.split('').forEach(c => {
  cells[c + 3] = { bg: c === 'G' ? '#365a96' : BLUE };
  cells[c + 4] = { bg: c === 'F' || c === 'G' ? '#343f50' : HEAD };
});
cells.B4 = { text: 'Category name', bg: HEAD, fg: '#fff', bold: true, clip: true, pad: 0 };
list('B', 5, [['Housing', DARK], ['Daily', LIGHT], ['Transport', DARK], ['Fun', LIGHT], ['Grocery', DARK], ['Pet', LIGHT]], 'none', true);
const head = (c: string, text: string, box = false) => { cells[c + 6] = { text, bg: HEAD, fg: '#fff', bold: true, pad: 11, box }; };
head('D', 'Housing'); head('F', 'Daily'); head('H', 'Transport'); head('J', 'Fun'); head('L', 'Grocery', true); head('N', 'Pet', true); head('P', 'Months', true);
list('D', 7, [['Rent', DARK], ['Home Supplies', LIGHT], ['Laundry', DARK], ['Internet/phone', DARK], ['Home Décor', DARK]]);
list('F', 7, [['Meds, Health & Beauty', DARK], ['Daily Other', DARK], ['OMF Loan', LIGHT], ['Motorcycle Loan', DARK], ['Clothes', DARK]]);
list('H', 7, [['Gas', DARK], ['Car Maintence', LIGHT], ['Bike Maintence', LIGHT], ['Car Insurance/Reg', DARK], ['Motorcycle Stuff', LIGHT]], 'last');
list('J', 7, [['Fun Other', DARK], ['Eating Out', DARK], ['Books', LIGHT], ['Subscriptions', DARK]], 'last');
list('L', 7, [['Groceries', DARK], ['Fees', LIGHT]], 'all');
list('N', 7, [['Food/litter', DARK], ['Medical', DARK], ['Toys/supplies', LIGHT]], 'all');
list('P', 7, ['January', 'February', 'March', 'April', 'May', 'June', 'July', 'August', 'September', 'October', 'November', 'December'].map((m, i) => [m, i % 2 ? LIGHT : DARK] as [string, string]), 'last');

const colTemplate = ['25px', ...COLS.map(c => `${c[1]}px`)].join(' ');
const rowTemplate = ['19px', ...ROWS.map(r => `${r}px`)].join(' ');

const GROUP_TABS: [string, number][] = [['File', 45], ['Home', 57], ['Insert', 53], ['Draw', 52], ['Page Layout', 93], ['Formulas', 74], ['Data', 48], ['Review', 60], ['View', 47], ['Developer', 81], ['Help', 40]];

const GroupFoot = ({ name, launch }: { name: string; launch?: boolean }) => (
  <LabelRow $launch={launch}><span /><span>{name}</span><LabelEnd $launch={launch}>{launch && <Launcher />}</LabelEnd></LabelRow>
);

export default function App() {
  return (
    <Page>
      <Global />
      <Chrome>
        <TitleBar>
          <TitleLeft>
            <ExcelLogo />
            <TitleText $ml={16}>AutoSave</TitleText>
            <Toggle>On<ToggleKnob /></Toggle>
            <Slot $ml={12}><SaveSync /></Slot>
            <VBar $ml={9} />
            <Slot $ml={12}><Brush /></Slot>
            <Slot $ml={17}><Customize /></Slot>
            <TitleText $ml={25}>Expenses 2023 &nbsp;•&nbsp;Saved <Chev s={9} /></TitleText>
          </TitleLeft>
          <SearchBox><SearchIcon />Search</SearchBox>
          <TitleRight>
            <TitleText>Crystal Cannon</TitleText>
            <Avatar><AvatarArt /></Avatar>
            <Slot $ml={27}><Diamond /></Slot>
            <Slot $ml={30}><PenSpark /></Slot>
            <Slot $ml={32}><WinMin /></Slot>
            <Slot $ml={36}><WinMax /></Slot>
            <Slot $ml={36}><WinClose /></Slot>
          </TitleRight>
        </TitleBar>

        <TabRow>
          {GROUP_TABS.map(([t, w]) => <RibbonTab key={t} $w={w} $on={t === 'Home'}>{t}</RibbonTab>)}
          <TabActions>
            <CommentsButton><Bubble />Comments</CommentsButton>
            <ShareButton><ShareIcon />Share<Slot $ml={6}><Chev c="#fff" /></Slot></ShareButton>
          </TabActions>
        </TabRow>

        <Ribbon>
          <Group $w={60}>
            <Body $pl={16}>
              <Stack $pt={1} $gap={6}>
                <Row $h={19} $gap={8}><UndoIcon /><Chev /></Row>
                <Row $h={19} $gap={8}><RedoIcon /><Chev c="#b5b5b5" /></Row>
              </Stack>
            </Body>
            <GroupFoot name="Undo" />
          </Group>

          <Group $w={170}>
            <Body $pl={9}>
              <Large $w={40}>
                <LargeIcon><PasteIcon /></LargeIcon>
                <LargeText>Paste<ChevLine><Chev /></ChevLine></LargeText>
              </Large>
              <Stack $ml={7} $w={110}>
                <Row $h={24}><Slot $ml={2}><Scissors /></Slot><SmallLabel $ml={8}>Cut</SmallLabel></Row>
                <Row $h={26}><CopyIcon /><SmallLabel $ml={3}>Copy</SmallLabel><Slot $ml={12}><Chev /></Slot></Row>
                <Row $h={26}><Brush /><SmallLabel $ml={4}>Format Painter</SmallLabel></Row>
              </Stack>
            </Body>
            <GroupFoot name="Clipboard" launch />
          </Group>

          <Group $w={236}>
            <Body $pl={9}>
              <Stack $pt={7} $gap={8}>
                <Row $h={23}>
                  <Select $w={122}>Calibri<Chev /></Select>
                  <Select $w={42} $ml={3}>11<Chev /></Select>
                  <Slot $ml={7}><AUp /></Slot>
                  <Slot $ml={8}><AUp down /></Slot>
                </Row>
                <Row $h={24}>
                  <BoldGlyph $w={24} $b $fs={14}>B</BoldGlyph>
                  <BoldGlyph $w={28} $i $serif $fs={14}>I</BoldGlyph>
                  <BoldGlyph $w={22} $u $fs={13}>U</BoldGlyph>
                  <Slot $ml={5}><Chev /></Slot>
                  <VBar $ml={7} $h={22} />
                  <Slot $ml={7}><BorderIcon /></Slot>
                  <Slot $ml={7}><Chev /></Slot>
                  <VBar $ml={7} $h={22} />
                  <Slot $ml={6}><FillIcon /></Slot>
                  <Slot $ml={6}><Chev /></Slot>
                  <Slot $ml={10}><FontColor /></Slot>
                  <Slot $ml={6}><Chev /></Slot>
                </Row>
              </Stack>
            </Body>
            <GroupFoot name="Font" launch />
          </Group>

          <Group $w={294}>
            <Body $pl={13}>
              <Stack $pt={7} $gap={8}>
                <Row $h={23}>
                  <Lines kind="top" />
                  <PressedCell><Lines kind="mid" /></PressedCell>
                  <Slot $ml={7}><Lines kind="bot" /></Slot>
                  <VBar $ml={7} $h={22} />
                  <Slot $ml={6}><Orientation /></Slot>
                  <Slot $ml={4}><Chev /></Slot>
                  <VBar $ml={23} $h={22} />
                  <Slot $ml={12}><WrapIcon /></Slot>
                  <SmallLabel $ml={5}>Wrap Text</SmallLabel>
                </Row>
                <Row $h={24}>
                  <Lines kind="l" />
                  <Slot $ml={12}><Lines kind="c" /></Slot>
                  <Slot $ml={12}><Lines kind="r" /></Slot>
                  <VBar $ml={7} $h={22} />
                  <Slot $ml={7}><Indent /></Slot>
                  <Slot $ml={12}><Indent inc /></Slot>
                  <VBar $ml={11} $h={22} />
                  <Slot $ml={10}><MergeIcon /></Slot>
                  <SmallLabel $ml={6}>Merge &amp; Center</SmallLabel>
                  <Slot $ml={14}><Chev /></Slot>
                </Row>
              </Stack>
            </Body>
            <GroupFoot name="Alignment" launch />
          </Group>

          <Group $w={162}>
            <Body $pl={9}>
              <Stack $pt={7} $gap={8}>
                <Select $w={145}>General<Chev /></Select>
                <Row $h={24} $ml={6}>
                  <BoldGlyph $w={12} $fs={17}>$</BoldGlyph>
                  <Slot $ml={9}><Chev /></Slot>
                  <BoldGlyph $w={20} $fs={17} $ml={9}>%</BoldGlyph>
                  <BoldGlyph $w={10} $b $fs={20} $ml={10} $lift={5}>,</BoldGlyph>
                  <VBar $ml={9} $h={24} />
                  <Slot $ml={6}><DecIcon /></Slot>
                  <Slot $ml={10}><DecIcon inc /></Slot>
                </Row>
              </Stack>
            </Body>
            <GroupFoot name="Number" launch />
          </Group>

          <Group $w={387}>
            <Body $pl={10}>
              <Large $w={70}><LargeIcon $pt={4}><CondFormat /></LargeIcon><LargeText>Conditional<Row $h={16} $gap={3}>Formatting <Chev /></Row></LargeText></Large>
              <Large $w={54} $ml={7}><LargeIcon $pt={2}><TableFormat /></LargeIcon><LargeText>Format as<Row $h={16} $gap={3}>Table <Chev /></Row></LargeText></Large>
              <Gallery>
                <StyleGrid>
                  <StyleChip $bg="#fff" $fg="#000" $on>Normal</StyleChip>
                  <StyleChip $bg="#ffc7ce" $fg="#9c0006">Bad</StyleChip>
                  <StyleChip $bg="#c6efce" $fg="#006100">Good</StyleChip>
                  <StyleChip $bg="#ffeb9c" $fg="#9c5700">Neutral</StyleChip>
                </StyleGrid>
                <GalleryScroll>
                  <GalleryStep><Chev c="#b5b5b5" up /></GalleryStep>
                  <GalleryStep><Chev /></GalleryStep>
                  <GalleryStep><Customize /></GalleryStep>
                </GalleryScroll>
              </Gallery>
            </Body>
            <GroupFoot name="Styles" />
          </Group>

          <Group $w={147}>
            <Body $pl={11}>
              <Large $w={36}><LargeIcon><CellIcon kind="ins" /></LargeIcon><LargeText>Insert<ChevLine><Chev /></ChevLine></LargeText></Large>
              <Large $w={40} $ml={7}><LargeIcon><CellIcon kind="del" /></LargeIcon><LargeText>Delete<ChevLine><Chev /></ChevLine></LargeText></Large>
              <Large $w={40} $ml={3}><LargeIcon><CellIcon kind="fmt" /></LargeIcon><LargeText>Format<ChevLine><Chev /></ChevLine></LargeText></Large>
            </Body>
            <GroupFoot name="Cells" />
          </Group>

          <Group $w={207}>
            <Body $pl={12}>
              <Stack $w={97}>
                <Row $h={24}><Slot $ml={2}><Sigma /></Slot><SmallLabel $ml={5}>AutoSum</SmallLabel><Slot $ml={12}><Chev /></Slot></Row>
                <Row $h={26}><FillDown /><SmallLabel $ml={5}>Fill</SmallLabel><Slot $ml={3}><Chev /></Slot></Row>
                <Row $h={26}><Eraser /><SmallLabel $ml={5}>Clear</SmallLabel><Slot $ml={3}><Chev /></Slot></Row>
              </Stack>
              <Large $w={40}><LargeIcon $pt={2}><SortIcon /></LargeIcon><LargeText>Sort &amp;<Row $h={16} $gap={3}>Filter <Chev /></Row></LargeText></Large>
              <Large $w={44} $ml={6}><LargeIcon $pt={1}><FindIcon /></LargeIcon><LargeText>Find &amp;<Row $h={16} $gap={3}>Select <Chev /></Row></LargeText></Large>
            </Body>
            <GroupFoot name="Editing" />
          </Group>

          <Group $w={62}>
            <Body $pl={6}>
              <Large $w={50}><LargeIcon><AnalyzeIcon /></LargeIcon><LargeText>Analyze<span>Data</span></LargeText></Large>
            </Body>
            <GroupFoot name="Analysis" />
          </Group>

          <Group $w={83}>
            <Body $pl={17}>
              <Large $w={50}><LargeIcon $pt={1}><MoneyIcon /></LargeIcon><LargeText>Money<span>in Excel</span></LargeText></Large>
            </Body>
            <GroupFoot name="Money in Excel" />
          </Group>

          <Group $w={88} $last>
            <Body />
            <Row $h={10}><Slot $ml={76}><Chev s={11} c="#333" /></Slot></Row>
          </Group>
        </Ribbon>

        <FormulaStrip>
          <NameBox>F3<Chev s={9} c="#222" /></NameBox>
          <DotsSlot><VDots /></DotsSlot>
          <FxBox><Cross /><Check /><FxMark>fx</FxMark></FxBox>
          <FormulaInput><Chev s={10} c="#333" /></FormulaInput>
        </FormulaStrip>
      </Chrome>

      <SheetArea>
        <Grid $cols={colTemplate} $rows={rowTemplate}>
          <Corner />
          {COLS.map(([c]) => <ColHead key={c} $on={c === 'F' || c === 'G'}>{c}</ColHead>)}
          {ROWS.map((h, i) => {
            const r = i + 1;
            return (
              <React.Fragment key={r}>
                <RowHead $on={r === 3 || r === 4}>{r}</RowHead>
                {COLS.map(([c]) => {
                  const s = cells[c + r] ?? {};
                  return <Cell key={c} $top={h >= 22 ? 2.5 : 1.5} $bg={s.bg} $fg={s.fg} $bold={s.bold} $pad={s.pad} $clip={s.clip} $box={s.box} $rule={s.rule} $title={s.title}>{s.text}</Cell>;
                })}
              </React.Fragment>
            );
          })}
          <Selection />
        </Grid>
        <VScroll>
          <Arrow dir="u" />
          <VThumb />
          <Arrow dir="d" />
        </VScroll>
      </SheetArea>

      <SheetTabs>
        <TabNav><Arrow dir="l" c="#bbb" /><Arrow dir="r" c="#bbb" /></TabNav>
        <SheetTab $w={91}>Breakdown</SheetTab>
        <SheetTab $w={79} $on>Catagory</SheetTab>
        <SheetTab $w={73}>Register</SheetTab>
        <TabEndBar />
        <AddArea><PlusCircle /></AddArea>
        <SheetDots><VDots /></SheetDots>
        <HScroll><Arrow dir="l" /><HThumb /><Slot $ml={30}><Arrow dir="r" /></Slot></HScroll>
      </SheetTabs>

      <StatusBar>
        <StatusText>Ready</StatusText>
        <Slot $ml={20}><MacroIcon /></Slot>
        <Slot $ml={17}><AccessIcon /></Slot>
        <StatusText $ml={3}>Accessibility: Investigate</StatusText>
        <ViewButton $on $ml={1383}><GridView /></ViewButton>
        <ViewButton><PageView /></ViewButton>
        <ViewButton><BreakView /></ViewButton>
        <Slot $ml={9}><WinMinSmall /></Slot>
        <ZoomTrack />
        <Slot $ml={4}><PlusSmall /></Slot>
        <StatusText $ml={12}>100%</StatusText>
      </StatusBar>

      <Taskbar>
        <Weather>
          <WeatherIcon><Snow /><NotifyDot>1</NotifyDot></WeatherIcon>
          <WeatherText>28°F<WeatherSub>Snow off and on</WeatherSub></WeatherText>
        </Weather>
        <WinLogo />
        <SearchPill><SearchGlass />Search</SearchPill>
        <Slot $ml={14}><TaskView /></Slot>
        <Slot $ml={20}><Folder /></Slot>
        <Slot $ml={22}><Calc /></Slot>
        <RunDot><Edge /></RunDot>
        <Slot $ml={21}><Hex /></Slot>
        <ActiveApp><ExcelLogo s={28} /></ActiveApp>
        <Slot $ml={494}><TrayCaret /></Slot>
        <Slot $ml={16}><Cloud /></Slot>
        <Slot $ml={19}><Keyboard /></Slot>
        <Slot $ml={20}><Wifi /></Slot>
        <Slot $ml={7}><Speaker /></Slot>
        <Clock>9:31 PM<span>2/22/2023</span></Clock>
        <CountBadge>3</CountBadge>
      </Taskbar>
    </Page>
  );
}
